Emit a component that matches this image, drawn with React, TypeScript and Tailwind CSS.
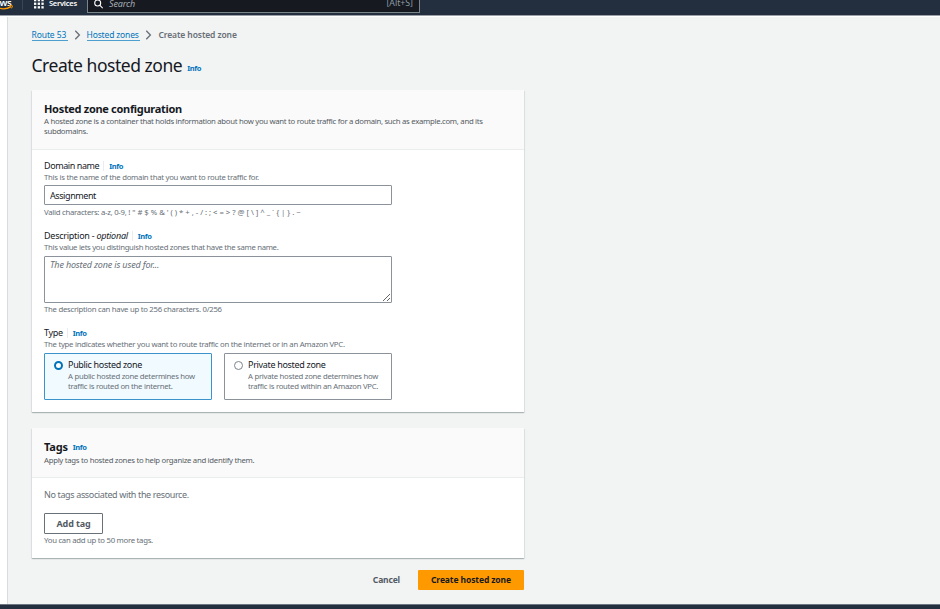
import { useState, type ReactNode } from 'react';
import clsx from 'clsx';

type ZoneType = 'public' | 'private';

interface TileProps {
  title: string;
  lines: string[];
  selected: boolean;
  onSelect: () => void;
}

function InfoLink({ divided, className }: { divided?: boolean; className?: string }) {
  return (
    <a
      href="#info"
      className={clsx(
        'text-[7.5px] leading-[10px] font-bold tracking-[-0.4px] text-[#0073bb]',
        divided && 'border-l border-[#eaeded] pl-[5px]',
        className
      )}
    >
      Info
    </a>
  );
}

function Label({ children }: { children: ReactNode }) {
  return (
    <div className="flex h-3 items-center text-[9px] leading-3 tracking-[-0.3px] text-[#16191f]">{children}</div>
  );
}

function Hint({ children, className }: { children: ReactNode; className?: string }) {
  return (
    <p
      className={clsx(
        'h-[10px] text-[7.75px] leading-[10px] tracking-[-0.27px] whitespace-nowrap text-[#687078]',
        className
      )}
    >
      {children}
    </p>
  );
}

function Card({ children, className }: { children: ReactNode; className?: string }) {
  return (
    <section
      className={clsx(
        'w-[492px] bg-white shadow-[0_1px_1px_0_rgba(0,28,36,0.2),1px_1px_1px_0_rgba(0,28,36,0.06),-1px_1px_1px_0_rgba(0,28,36,0.06)]',
        className
      )}
    >
      {children}
    </section>
  );
}

function Tile({ title, lines, selected, onSelect }: TileProps) {
  return (
    <button
      type="button"
      role="radio"
      aria-checked={selected}
      onClick={onSelect}
      className={clsx(
        'flex h-[47px] w-[168px] items-start rounded-[1px] border pt-[5px] pl-[9px] text-left',
        selected ? 'border-[#3c92ca] bg-[#f1faff]' : 'border-[#8b9299] bg-white'
      )}
    >
      <span
        className={clsx(
          'mt-[2px] box-border size-[9px] shrink-0 rounded-full bg-white',
          selected ? 'border-[2.5px] border-[#0073bb]' : 'border border-[#7d858c]'
        )}
      />
      <span className="ml-[5px] flex flex-col whitespace-nowrap">
        <span className="h-3 text-[9px] leading-3 tracking-[-0.32px] text-[#16191f]">{title}</span>
        {lines.map((line) => (
          <span key={line} className="h-[10px] text-[7.75px] leading-[11px] tracking-[-0.28px] text-[#687078]">
            {line}
          </span>
        ))}
      </span>
    </button>
  );
}

function TopBar() {
  return (
    <header className="flex h-4 items-start overflow-hidden border-b border-[#9aa0a6] bg-[#232f3e] text-[8px] text-white">
      <div className="h-[15px] w-[13px] shrink-0 overflow-hidden">
        <svg width="13" height="15" viewBox="0 0 13 15">
          <text x="-5.5" y="6" fontSize="9.5" fontWeight="600" letterSpacing="-0.5" fill="#fff">
            aws
          </text>
          <path d="M0 8.4C4.5 9.4 8.2 8.4 11.2 6.6" fill="none" stroke="#ff9900" strokeWidth="1.3" />
          <path d="M9 5.9C10.6 5.2 12.3 5.2 12.4 5.8C12.5 6.6 12 7.6 11.4 8.4" fill="none" stroke="#ff9900" strokeWidth="1" />
        </svg>
      </div>
      <div className="ml-[9px] h-[10px] w-px bg-[#3b4552]" />
      <svg className="ml-[11px]" width="10" height="9" viewBox="0 0 10 9" fill="#fff">
        {[-1, 2.6, 6.2].map((y) =>
          [0, 3.7, 7.4].map((x) => <rect key={`${x}-${y}`} x={x} y={y} width="2.3" height="2.3" />)
        )}
      </svg>
      <span className="-mt-[3px] ml-[5px] w-[38px] text-[7.5px] leading-3 font-semibold tracking-[-0.25px]">
        Services
      </span>
      <div className="-mt-2 flex h-[21px] w-[333px] items-start border border-[#79878b] bg-[#16191f] pt-[3px] pr-[6px] pl-[6px]">
        <svg className="mt-[3px]" width="9" height="10" viewBox="0 0 9 10" fill="none" stroke="#fff" strokeWidth="1.1">
          <circle cx="3.7" cy="4" r="3" />
          <path d="M6 6.4L8.7 9.2" />
        </svg>
        <span className="ml-[6px] flex-1 text-[9px] leading-[15px] tracking-[-0.15px] text-[#a5adb5] italic">
          Search
        </span>
        <span className="text-[8.75px] leading-[15px] text-[#8d99a5]">[Alt+S]</span>
      </div>
    </header>
  );
}

function Chevron() {
  return (
    <svg width="6" height="10" viewBox="0 0 6 10" fill="none" stroke="#687078" strokeWidth="1.3">
      <path d="M0.3 0.8L4.4 5L0.3 9.2" />
    </svg>
  );
}

function Breadcrumbs() {
  return (
    <nav className="flex h-3 items-center text-[8.5px] leading-[11px] tracking-[-0.1px] whitespace-nowrap">
      <a href="#route53" className="-ml-[0.5px] w-9 border-b border-[#4d9fd0] text-[#0073bb]">
        Route 53
      </a>
      <span className="ml-[7px]">
        <Chevron />
      </span>
      <a href="#zones" className="ml-[6px] w-[53px] border-b border-[#4d9fd0] tracking-[-0.15px] text-[#0073bb]">
        Hosted zones
      </a>
      <span className="ml-[6px]">
        <Chevron />
      </span>
      <span className="-mt-[2px] ml-[7px] font-semibold text-[#687078]">Create hosted zone</span>
    </nav>
  );
}

export default function App() {
  const [zoneType, setZoneType] = useState<ZoneType>('public');
  const [domain, setDomain] = useState('Assignment');
  const [description, setDescription] = useState('');

  return (
    <div className="flex h-[609px] w-[940px] flex-col overflow-hidden bg-[#f2f3f3] font-['Noto_Sans','Open_Sans',sans-serif]">
      <TopBar />
      <div className="flex flex-1 border-t border-white">
        <div className="w-2 border-r border-[#d9dcdc] bg-white" />
        <main className="flex w-[516px] flex-col pt-3 pl-6">
          <Breadcrumbs />

          <div className="mt-[12px] flex h-6 items-center whitespace-nowrap">
            <h1 className="-ml-[0.5px] text-[17.5px] leading-6 tracking-[-0.47px] text-[#16191f]">
              Create hosted zone
            </h1>
            <InfoLink className="mt-[6px] ml-[5px]" />
          </div>

          <Card className="mt-[13px] h-[322px]">
            <div className="h-[60px] border-b border-[#eaeded] bg-[#fafafa] pt-[11px] pl-3 whitespace-nowrap">
              <h2 className="h-[15px] text-[11px] leading-[15px] font-bold tracking-[-0.31px] text-[#16191f]">
                Hosted zone configuration
              </h2>
              <p className="text-[7.75px] leading-[10px] tracking-[-0.29px] text-[#545b64]">
                A hosted zone is a container that holds information about how you want to route traffic for a domain, such as example.com, and its
                <br />
                subdomains.
              </p>
            </div>
            <div className="pt-[10px] pl-3">
              <Label>
                <span className="tracking-[-0.42px]">Domain name</span>
                <InfoLink divided className="ml-1" />
              </Label>
              <Hint className="tracking-[-0.25px]">This is the name of the domain that you want to route traffic for.</Hint>
              <input
                aria-label="Domain name"
                value={domain}
                onChange={(e) => setDomain(e.target.value)}
                className="mt-[3px] block h-5 w-[348px] rounded-[1px] border border-[#8b9299] bg-white px-[5px] text-[9px] tracking-[-0.42px] text-[#16191f] outline-none"
              />
              <Hint className="mt-[2px]">
                <span>Valid characters: a-z, 0-9, </span>
                <span className="tracking-[-0.03px]">
                  {'! " # $ % & \' ( ) * + , - / : ; < = > ? @ [ \\ ] ^ _ ` { | } . ~'}
                </span>
              </Hint>

              <div className="mt-[13px]">
                <Label>
                  <span className="tracking-[-0.25px]">
                    Description - <i>optional</i>
                  </span>
                  <InfoLink divided className="ml-1" />
                </Label>
              </div>
              <Hint className="tracking-[-0.31px]">This value lets you distinguish hosted zones that have the same name.</Hint>
              <textarea
                aria-label="Description"
                value={description}
                onChange={(e) => setDescription(e.target.value)}
                placeholder="The hosted zone is used for..."
                className="mt-1 block h-[47px] w-[348px] rounded-[1px] border border-[#8b9299] bg-white px-[5px] pt-[2px] text-[9px] leading-3 tracking-[-0.16px] outline-none placeholder:text-[#687078] placeholder:italic"
              />
              <Hint className="mt-px">The description can have up to 256 characters. 0/256</Hint>

              <div className="mt-[13px]">
                <Label>
                  <span>Type</span>
                  <InfoLink divided className="ml-1" />
                </Label>
              </div>
              <Hint>The type indicates whether you want to route traffic on the internet or in an Amazon VPC.</Hint>
              <div role="radiogroup" className="mt-1 flex gap-3">
                <Tile
                  title="Public hosted zone"
                  lines={['A public hosted zone determines how', 'traffic is routed on the internet.']}
                  selected={zoneType === 'public'}
                  onSelect={() => setZoneType('public')}
                />
                <Tile
                  title="Private hosted zone"
                  lines={['A private hosted zone determines how', 'traffic is routed within an Amazon VPC.']}
                  selected={zoneType === 'private'}
                  onSelect={() => setZoneType('private')}
                />
              </div>
            </div>
          </Card>

          <Card className="mt-4 h-[130px]">
            <div className="h-[50px] border-b border-[#eaeded] bg-[#fafafa] pt-[11px] pl-3">
              <div className="flex h-[15px] items-center">
                <h2 className="text-[11px] leading-[15px] font-bold tracking-[-0.2px] text-[#16191f]">Tags</h2>
                <InfoLink className="ml-[5px]" />
              </div>
              <p className="mt-px text-[7.75px] leading-[10px] tracking-[-0.28px] text-[#545b64]">
                Apply tags to hosted zones to help organize and identify them.
              </p>
            </div>
            <div className="pt-[11px] pl-3">
              <p className="h-3 text-[9px] leading-3 tracking-[-0.36px] text-[#687078]">
                No tags associated with the resource.
              </p>
              <button
                type="button"
                className="mt-[12px] block h-[21px] w-[59px] rounded-[1px] border border-[#687078] bg-white text-[9px] font-bold tracking-[-0.15px] text-[#545b64]"
              >
                Add tag
              </button>
              <Hint className="mt-px">You can add up to 50 more tags.</Hint>
            </div>
          </Card>

          <div className="mt-3 flex items-center justify-end">
            <button type="button" className="mr-[18px] text-[8.5px] font-bold tracking-[-0.15px] text-[#545b64]">
              Cancel
            </button>
            <button
              type="button"
              className="h-5 w-[106px] rounded-[1px] bg-[#ff9900] text-[8.5px] font-bold tracking-[-0.1px] whitespace-nowrap text-[#16191f]"
            >
              Create hosted zone
            </button>
          </div>
        </main>
      </div>
      <footer className="h-[5px] border-t border-[#6d7680] bg-[#232f3e]" />
    </div>
  );
}
